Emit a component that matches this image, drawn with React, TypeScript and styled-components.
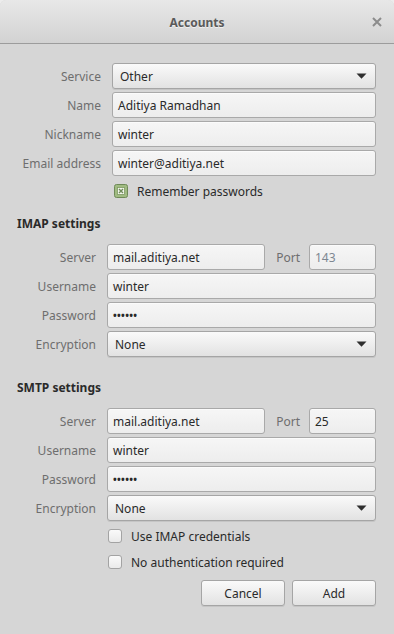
import React from "react";
import styled, { createGlobalStyle } from "styled-components";

const Global = createGlobalStyle`
  html, body { margin: 0; padding: 0; background: #ececec; }
  body { font-family: "Noto Sans", "Open Sans", sans-serif; font-size: 12px; line-height: 17px; color: #333; }
  * { box-sizing: border-box; }
`;

const Window = styled.div`
  width: 394px;
  height: 634px;
  background: #d6d6d6;
  border-radius: 6px 6px 0 0;
  overflow: hidden;
  display: flex;
  flex-direction: column;
`;

const Header = styled.div`
  height: 44px;
  flex: none;
  position: relative;
  display: flex;
  align-items: center;
  justify-content: center;
  padding-top: 1px;
  background: linear-gradient(#e8e8e8, #d2d2d2);
  border-bottom: 1px solid #9c9c9c;
`;

const Title = styled.div`
  font-weight: bold;
  font-size: 12px;
  color: #5a5a5a;
  text-shadow: 0 1px 0 rgba(255, 255, 255, 0.6);
`;

const Close = styled.div`
  position: absolute;
  right: 11px;
  top: 16px;
  width: 12px;
  height: 12px;
  display: flex;
`;

const Content = styled.div`
  padding: 19px 18px 0 0;
  display: flex;
  flex-direction: column;
`;

const Grid = styled.div<{ $label: number }>`
  display: grid;
  grid-template-columns: ${(p) => p.$label}px 1fr;
  column-gap: 11px;
  row-gap: 3px;
  grid-auto-rows: 26px;
  align-items: center;
`;

const Label = styled.div`
  text-align: right;
  color: #6e6e6e;
  white-space: nowrap;
`;

const Entry = styled.div<{ $dim?: boolean }>`
  height: 26px;
  border: 1px solid #a9a9a9;
  border-radius: 3px;
  background: linear-gradient(#f6f6f6, #ededed);
  box-shadow: inset 0 1px 0 rgba(255, 255, 255, 0.6);
  display: flex;
  align-items: center;
  padding: 0 5px;
  color: ${(p) => (p.$dim ? "#7d8791" : "#2a2a2a")};
  white-space: nowrap;
  overflow: hidden;
  min-width: 0;
`;

const Dots = styled.span`
  font-size: 10px;
  letter-spacing: 0.3px;
  font-weight: bold;
`;

const Combo = styled.div`
  height: 26px;
  border: 1px solid #a5a5a5;
  border-radius: 3px;
  background: linear-gradient(#fafafa, #e2e2e2);
  box-shadow: 0 1px 0 rgba(0, 0, 0, 0.08);
  display: flex;
  align-items: center;
  justify-content: space-between;
  padding: 0 8px 0 7px;
  color: #2a2a2a;
`;

const ServerRow = styled.div`
  display: flex;
  align-items: center;
  min-width: 0;
`;

const PortLabel = styled(Label)`
  margin: 0 9px 0 11px;
`;

const PortEntry = styled(Entry)`
  width: 67px;
  flex: none;
`;

const Check = styled.div<{ $indent: number; $top: number }>`
  display: flex;
  align-items: center;
  gap: 9px;
  height: 20px;
  margin-left: ${(p) => p.$indent}px;
  margin-top: ${(p) => p.$top}px;
  color: #2a2a2a;
`;

const Box = styled.div`
  width: 14px;
  height: 14px;
  border: 1px solid #a3a3a3;
  border-radius: 3px;
  background: linear-gradient(#fafafa, #eaeaea);
  flex: none;
`;

const Heading = styled.div<{ $top: number }>`
  font-weight: bold;
  color: #2a2a2a;
  margin: ${(p) => p.$top}px 0 11px 17px;
  line-height: 18px;
`;

const Buttons = styled.div`
  display: flex;
  justify-content: flex-end;
  gap: 7px;
  margin-top: 8px;
`;

const Button = styled.div`
  width: 84px;
  height: 26px;
  border: 1px solid #a5a5a5;
  border-radius: 3px;
  background: linear-gradient(#fafafa, #e2e2e2);
  box-shadow: 0 1px 0 rgba(0, 0, 0, 0.08);
  display: flex;
  align-items: center;
  justify-content: center;
  color: #2a2a2a;
`;

const Arrow = () => (
  <svg width="11" height="6" viewBox="0 0 11 6">
    <path d="M0.5 0.5 L10.5 0.5 L5.5 5.8 Z" fill="#2e2e2e" />
  </svg>
);

const CheckedBox = () => (
  <svg width="14" height="14" viewBox="0 0 14 14">
    <rect x="0.5" y="0.5" width="13" height="13" rx="2" fill="#a0bb82" stroke="#6f8a58" />
    <rect x="3.5" y="3.5" width="7" height="7" fill="#f4f7ef" stroke="#7e9a64" strokeWidth="0.8" />
    <path d="M5 5 L9 9 M9 5 L5 9" stroke="#6f8a58" strokeWidth="1.4" />
  </svg>
);

export default function App() {
  return (
    <>
      <Global />
      <Window>
        <Header>
          <Title>Accounts</Title>
          <Close>
            <svg width="12" height="12" viewBox="0 0 12 12">
              <path d="M2 2 L10 10 M10 2 L2 10" stroke="#8c8c8c" strokeWidth="2" />
            </svg>
          </Close>
        </Header>
        <Content>
          <Grid $label={101}>
            <Label>Service</Label>
            <Combo>
              <span>Other</span>
              <Arrow />
            </Combo>
            <Label>Name</Label>
            <Entry>Aditiya Ramadhan</Entry>
            <Label>Nickname</Label>
            <Entry>winter</Entry>
            <Label>Email address</Label>
            <Entry>winter@aditiya.net</Entry>
          </Grid>
          <Check $indent={114} $top={5}>
            <CheckedBox />
            <span>Remember passwords</span>
          </Check>

          <Heading $top={14}>IMAP settings</Heading>
          <Grid $label={96}>
            <Label>Server</Label>
            <ServerRow>
              <Entry style={{ flex: 1 }}>mail.aditiya.net</Entry>
              <PortLabel>Port</PortLabel>
              <PortEntry $dim>143</PortEntry>
            </ServerRow>
            <Label>Username</Label>
            <Entry>winter</Entry>
            <Label>Password</Label>
            <Entry>
              <Dots>••••••</Dots>
            </Entry>
            <Label>Encryption</Label>
            <Combo>
              <span>None</span>
              <Arrow />
            </Combo>
          </Grid>

          <Heading $top={22}>SMTP settings</Heading>
          <Grid $label={96}>
            <Label>Server</Label>
            <ServerRow>
              <Entry style={{ flex: 1 }}>mail.aditiya.net</Entry>
              <PortLabel>Port</PortLabel>
              <PortEntry>25</PortEntry>
            </ServerRow>
            <Label>Username</Label>
            <Entry>winter</Entry>
            <Label>Password</Label>
            <Entry>
              <Dots>••••••</Dots>
            </Entry>
            <Label>Encryption</Label>
            <Combo>
              <span>None</span>
              <Arrow />
            </Combo>
          </Grid>
          <Check $indent={108} $top={5}>
            <Box />
            <span>Use IMAP credentials</span>
          </Check>
          <Check $indent={108} $top={6}>
            <Box />
            <span>No authentication required</span>
          </Check>
          <Buttons>
            <Button>Cancel</Button>
            <Button>Add</Button>
          </Buttons>
        </Content>
      </Window>
    </>
  );
}
